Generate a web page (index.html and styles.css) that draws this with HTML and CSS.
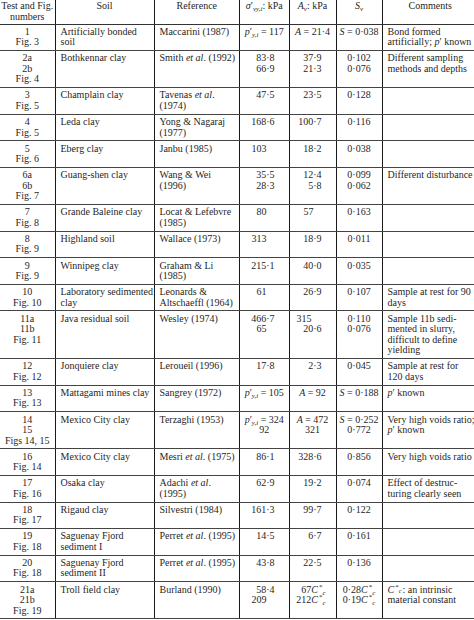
FILE: index.html
```html
<!DOCTYPE html>
<html>
<head>
<meta charset="utf-8">
<link rel="stylesheet" href="styles.css">
</head>
<body>
<table class="tbl">
<colgroup>
<col class="w1"><col class="w2"><col class="w3"><col class="w4"><col class="w5"><col class="w6"><col class="w7">
</colgroup>
<thead>
<tr>
<th class="first">Test and Fig.<br>numbers</th>
<th>Soil</th>
<th>Reference</th>
<th><i>σ</i>′<sub><i>vy,i</i></sub>: kPa</th>
<th><i>A</i><sub><i>v</i></sub>: kPa</th>
<th><i>S</i><sub><i>v</i></sub></th>
<th class="last">Comments</th>
</tr>
</thead>
<tbody>
<tr>
<td class="n">1<br>Fig. 3</td>
<td class="t">Artificially bonded<br>soil</td>
<td class="t">Maccarini (1987)</td>
<td class="f"><i>p</i>′<sub><i>y,i</i></sub> = 117</td>
<td class="f"><i>A</i> = 21·4</td>
<td class="f"><i>S</i> = 0·038</td>
<td class="t last">Bond formed<br>artificially; <i>p</i>′ known</td>
</tr>
<tr>
<td class="n">2a<br>2b<br>Fig. 4</td>
<td class="t">Bothkennar clay</td>
<td class="t">Smith <i>et al</i>. (1992)</td>
<td class="s">83·8<br>66·9</td>
<td class="a">37·9<br>21·3</td>
<td class="v">0·102<br>0·076</td>
<td class="t last">Different sampling<br>methods and depths</td>
</tr>
<tr>
<td class="n">3<br>Fig. 5</td>
<td class="t">Champlain clay</td>
<td class="t">Tavenas <i>et al</i>.<br>(1974)</td>
<td class="s">47·5</td>
<td class="a">23·5</td>
<td class="v">0·128</td>
<td class="t last"></td>
</tr>
<tr>
<td class="n">4<br>Fig. 5</td>
<td class="t">Leda clay</td>
<td class="t">Yong &amp; Nagaraj<br>(1977)</td>
<td class="s">168·6</td>
<td class="a">100·7</td>
<td class="v">0·116</td>
<td class="t last"></td>
</tr>
<tr>
<td class="n">5<br>Fig. 6</td>
<td class="t">Eberg clay</td>
<td class="t">Janbu (1985)</td>
<td class="s">103<span class="sp"></span></td>
<td class="a">18·2</td>
<td class="v">0·038</td>
<td class="t last"></td>
</tr>
<tr>
<td class="n">6a<br>6b<br>Fig. 7</td>
<td class="t">Guang-shen clay</td>
<td class="t">Wang &amp; Wei<br>(1996)</td>
<td class="s">35·5<br>28·3</td>
<td class="a">12·4<br>5·8</td>
<td class="v">0·099<br>0·062</td>
<td class="t last">Different disturbance</td>
</tr>
<tr>
<td class="n">7<br>Fig. 8</td>
<td class="t">Grande Baleine clay</td>
<td class="t">Locat &amp; Lefebvre<br>(1985)</td>
<td class="s">80<span class="sp"></span></td>
<td class="a">57<span class="sp"></span></td>
<td class="v">0·163</td>
<td class="t last"></td>
</tr>
<tr>
<td class="n">8<br>Fig. 9</td>
<td class="t">Highland soil</td>
<td class="t">Wallace (1973)</td>
<td class="s">313<span class="sp"></span></td>
<td class="a">18·9</td>
<td class="v">0·011</td>
<td class="t last"></td>
</tr>
<tr>
<td class="n">9<br>Fig. 9</td>
<td class="t">Winnipeg clay</td>
<td class="t">Graham &amp; Li<br>(1985)</td>
<td class="s">215·1</td>
<td class="a">40·0</td>
<td class="v">0·035</td>
<td class="t last"></td>
</tr>
<tr>
<td class="n">10<br>Fig. 10</td>
<td class="t">Laboratory sedimented<br>clay</td>
<td class="t">Leonards &amp;<br>Altschaeffl (1964)</td>
<td class="s">61<span class="sp"></span></td>
<td class="a">26·9</td>
<td class="v">0·107</td>
<td class="t last">Sample at rest for 90<br>days</td>
</tr>
<tr>
<td class="n">11a<br>11b<br>Fig. 11</td>
<td class="t">Java residual soil</td>
<td class="t">Wesley (1974)</td>
<td class="s">466·7<br>65<span class="sp"></span></td>
<td class="a">315<span class="sp2"></span><br>20·6</td>
<td class="v">0·110<br>0·076</td>
<td class="t last">Sample 11b sedi-<br>mented in slurry,<br>difficult to define<br>yielding</td>
</tr>
<tr>
<td class="n">12<br>Fig. 12</td>
<td class="t">Jonquiere clay</td>
<td class="t">Leroueil (1996)</td>
<td class="s">17·8</td>
<td class="a">2·3</td>
<td class="v">0·045</td>
<td class="t last">Sample at rest for<br>120 days</td>
</tr>
<tr>
<td class="n">13<br>Fig. 13</td>
<td class="t">Mattagami mines clay</td>
<td class="t">Sangrey (1972)</td>
<td class="f"><i>p</i>′<sub><i>y,i</i></sub> = 105</td>
<td class="f"><i>A</i> = 92</td>
<td class="f"><i>S</i> = 0·188</td>
<td class="t last"><i>p</i>′ known</td>
</tr>
<tr>
<td class="n">14<br>15<br>Figs 14, 15</td>
<td class="t">Mexico City clay</td>
<td class="t">Terzaghi (1953)</td>
<td class="f"><i>p</i>′<sub><i>y,i</i></sub> = 324<br>92</td>
<td class="f"><i>A</i> = 472<br>321</td>
<td class="f"><i>S</i> = 0·252<br>0·772</td>
<td class="t last">Very high voids ratio;<br><i>p</i>′ known</td>
</tr>
<tr>
<td class="n">16<br>Fig. 14</td>
<td class="t">Mexico City clay</td>
<td class="t">Mesri <i>et al</i>. (1975)</td>
<td class="s">86·1</td>
<td class="a">328·6</td>
<td class="v">0·856</td>
<td class="t last">Very high voids ratio</td>
</tr>
<tr>
<td class="n">17<br>Fig. 16</td>
<td class="t">Osaka clay</td>
<td class="t">Adachi <i>et al</i>.<br>(1995)</td>
<td class="s">62·9</td>
<td class="a">19·2</td>
<td class="v">0·074</td>
<td class="t last">Effect of destruc-<br>turing clearly seen</td>
</tr>
<tr>
<td class="n">18<br>Fig. 17</td>
<td class="t">Rigaud clay</td>
<td class="t">Silvestri (1984)</td>
<td class="s">161·3</td>
<td class="a">99·7</td>
<td class="v">0·122</td>
<td class="t last"></td>
</tr>
<tr>
<td class="n">19<br>Fig. 18</td>
<td class="t">Saguenay Fjord<br>sediment I</td>
<td class="t">Perret <i>et al</i>. (1995)</td>
<td class="s">14·5</td>
<td class="a">6·7</td>
<td class="v">0·161</td>
<td class="t last"></td>
</tr>
<tr>
<td class="n">20<br>Fig. 18</td>
<td class="t">Saguenay Fjord<br>sediment II</td>
<td class="t">Perret <i>et al</i>. (1995)</td>
<td class="s">43·8</td>
<td class="a">22·5</td>
<td class="v">0·136</td>
<td class="t last"></td>
</tr>
<tr>
<td class="n">21a<br>21b<br>Fig. 19</td>
<td class="t">Troll field clay</td>
<td class="t">Burland (1990)</td>
<td class="s">58·4<br>209<span class="sp"></span></td>
<td class="a cc">67<i>C</i><sup>*</sup><sub><i>c</i></sub><br>212<i>C</i><sup>*</sup><sub><i>c</i></sub></td>
<td class="v">0·28<i>C</i><sup>*</sup><sub><i>c</i></sub><br>0·19<i>C</i><sup>*</sup><sub><i>c</i></sub></td>
<td class="t last"><i>C</i><sup>*</sup><sub class="cl"><i>c</i></sub>: an intrinsic<br>material constant</td>
</tr>
</tbody>
</table>
</body>
</html>
```
FILE: styles.css
```css
html, body {
  margin: 0;
  padding: 0;
  background: #ffffff;
  overflow: hidden;
}

.tbl {
  border-collapse: collapse;
  table-layout: fixed;
  width: 478px;
  font-family: "Liberation Serif", "Times New Roman", serif;
  font-size: 10px;
  line-height: 10.5px;
  color: #1f1f1f;
}

.w1 { width: 55px; }
.w2 { width: 99px; }
.w3 { width: 85.5px; }
.w4 { width: 49.5px; }
.w5 { width: 47px; }
.w6 { width: 46px; }
.w7 { width: 96px; }

.tbl th,
.tbl td {
  border-left: 1px solid #1a1a1a;
  border-right: 1px solid #1a1a1a;
  vertical-align: top;
  white-space: nowrap;
  overflow: hidden;
}

.tbl th {
  font-weight: normal;
  text-align: center;
  padding: 1px 0 1.5px;
  border-bottom: 1px solid #333333;
}

.tbl td {
  padding: 2.3px 0 2.3px;
  border-bottom: 1px solid #444444;
}

.tbl .first,
.tbl tr > td:first-child {
  border-left: none;
}

.tbl .last {
  border-right: none;
}

.n {
  text-align: center;
}

.t {
  text-align: left;
  padding-left: 5px !important;
}

.s {
  text-align: right;
  padding-right: 14px !important;
}

.a {
  text-align: right;
  padding-right: 14px !important;
}

.a.cc {
  padding-right: 10px !important;
}

.v {
  text-align: center;
}

.f {
  text-align: center;
}

.sp {
  display: inline-block;
  width: 8px;
}

.sp2 {
  display: inline-block;
  width: 10px;
}

sub, sup {
  font-size: 7px;
  line-height: 0;
}

sub {
  vertical-align: -2px;
}

sup {
  vertical-align: 4px;
  margin-left: 1px;
}

sub.cl {
  vertical-align: -0.5px;
  font-size: 6.5px;
  margin-right: 1px;
}
```
